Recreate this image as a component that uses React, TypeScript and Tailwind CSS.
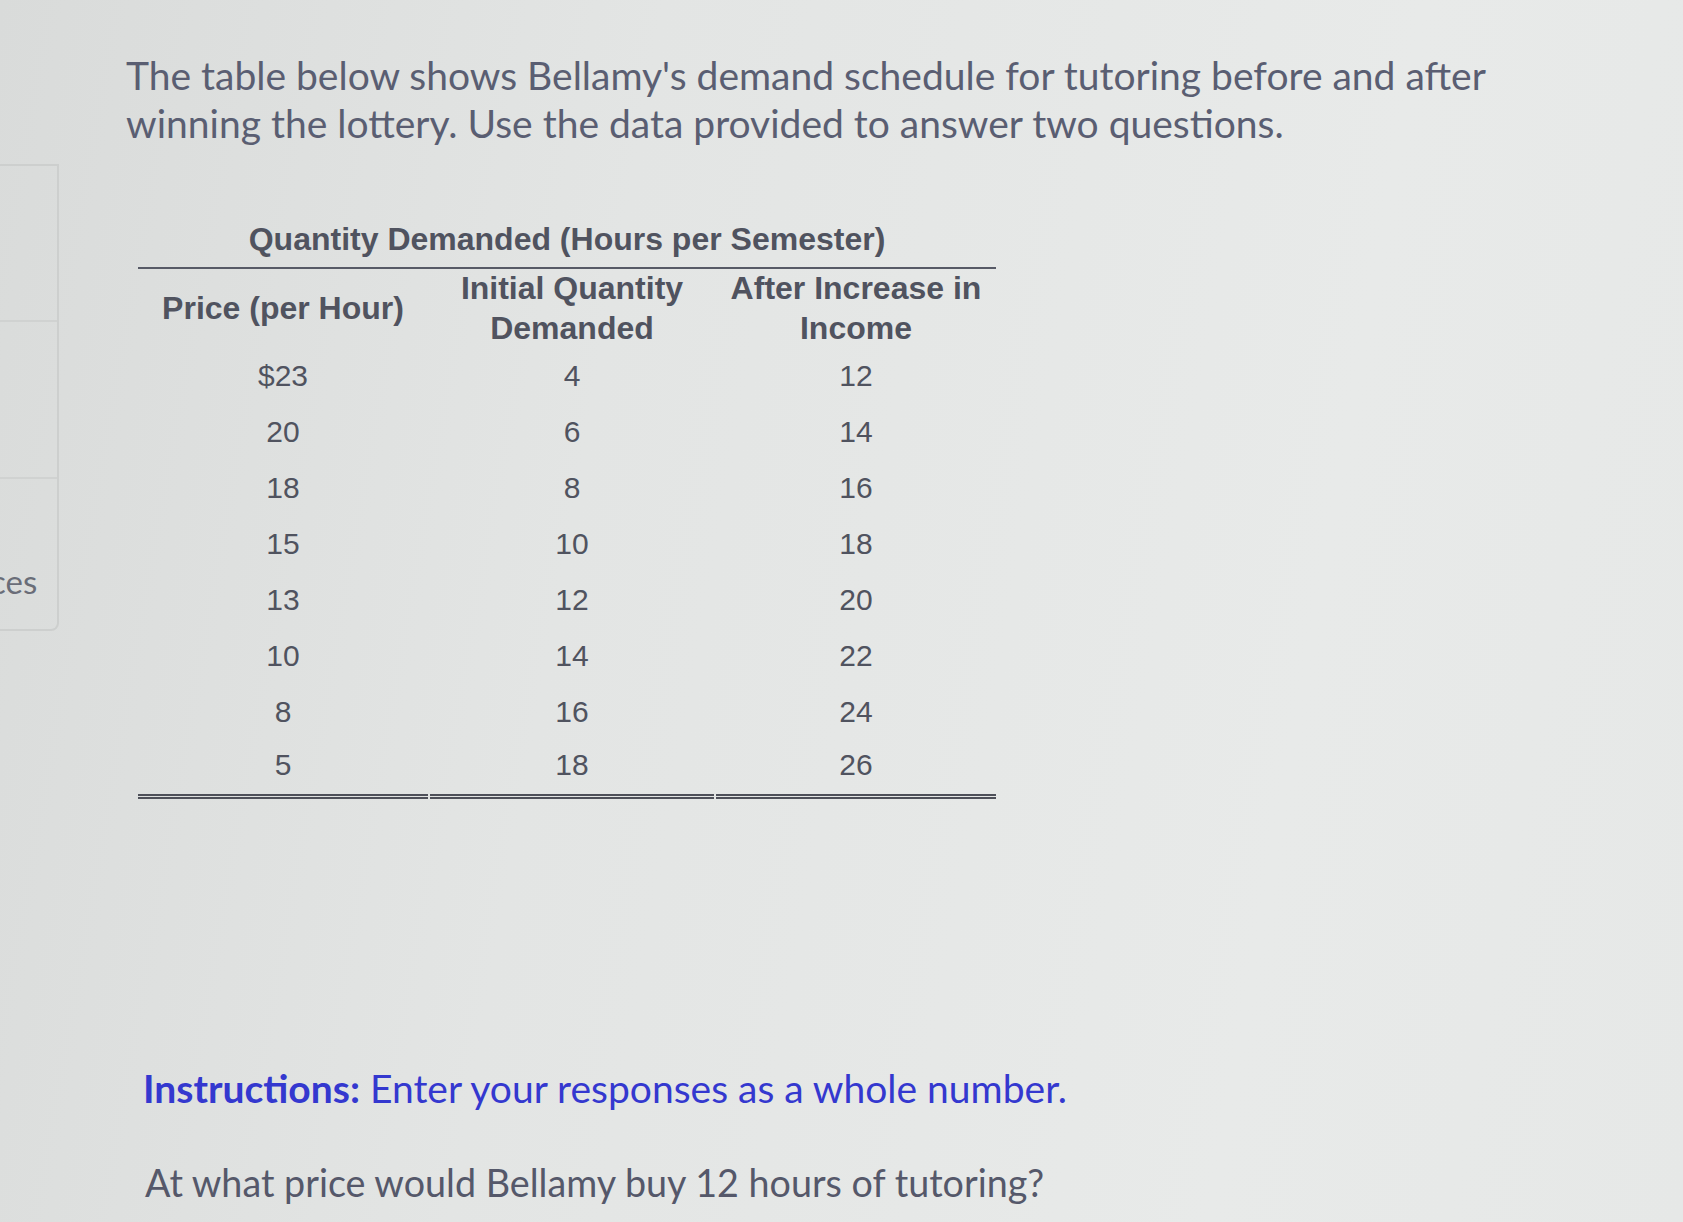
import React from 'react'

const ROWS = [
  ['$23', '4', '12'],
  ['20', '6', '14'],
  ['18', '8', '16'],
  ['15', '10', '18'],
  ['13', '12', '20'],
  ['10', '14', '22'],
  ['8', '16', '24'],
  ['5', '18', '26'],
]

function SidePanel() {
  return (
    <div className="w-[59px] shrink-0 pt-[164px]">
      <div className="h-[467px] border-t-2 border-r-2 border-b-2 border-[#cdcfce] rounded-br-[8px] flex flex-col">
        <div className="h-[156px] border-b-2 border-[#d0d2d1]" />
        <div className="h-[157px] border-b-2 border-[#d0d2d1]" />
        <div className="flex-1 overflow-hidden pt-[86px]">
          <div className="ml-[-10px] font-['Lato',sans-serif] text-[33px] leading-none text-[#6a6d78]">
            ces
          </div>
        </div>
      </div>
    </div>
  )
}

function DemandTable() {
  return (
    <div className="w-[858px] ml-[12px] mt-[72px] font-['Liberation_Sans',Arial,sans-serif] text-[#50535f]">
      <div className="text-center font-bold text-[32px] leading-[40px]">
        Quantity Demanded (Hours per Semester)
      </div>
      <div className="mt-[8px] h-[2px] bg-[#575a66]" />

      <div className="grid grid-cols-[290px_284px_280px] gap-x-[2px]">
        {/* header */}
        <div className="h-[78px] flex items-center justify-center font-bold text-[32px] leading-[40px] text-center">
          Price (per Hour)
        </div>
        <div className="h-[78px] flex items-center justify-center font-bold text-[32px] leading-[40px] text-center">
          Initial Quantity
          <br />
          Demanded
        </div>
        <div className="h-[78px] flex items-center justify-center font-bold text-[32px] leading-[40px] text-center">
          After Increase in
          <br />
          Income
        </div>

        {ROWS.map((row, i) =>
          row.map((cell, j) => (
            <div
              key={`${i}-${j}`}
              className={
                i === ROWS.length - 1
                  ? 'h-[60px] pb-[5px] flex items-center justify-center text-[30px] border-b-[5px] border-double border-[#4e5059]'
                  : 'h-[56px] flex items-center justify-center text-[30px]'
              }
            >
              {cell}
            </div>
          ))
        )}
      </div>
    </div>
  )
}

export default function App() {
  return (
    <div className="w-[1683px] h-[1222px] overflow-hidden flex bg-[linear-gradient(100deg,#d9dbda_0%,#e3e5e4_35%,#e8eae9_75%,#e6e8e7_100%)]">
      <SidePanel />

      <div className="ml-[67px] flex-1 pt-[51px]">
        <p className="w-[1450px] font-['Lato',sans-serif] text-[39px] leading-[48px] text-[#5a5e72]">
          The table below shows Bellamy's demand schedule for tutoring before and after winning the
          lottery. Use the data provided to answer two questions.
        </p>

        <DemandTable />

        <p className="mt-[265px] ml-[17px] font-['Lato',sans-serif] text-[39px] leading-[48px] text-[#3438cf]">
          <span className="font-bold">Instructions:</span> Enter your responses as a whole number.
        </p>

        <p className="mt-[47px] ml-[19px] font-['Lato',sans-serif] text-[37.7px] leading-[48px] text-[#55586a]">
          At what price would Bellamy buy 12 hours of tutoring?
        </p>
      </div>
    </div>
  )
}
